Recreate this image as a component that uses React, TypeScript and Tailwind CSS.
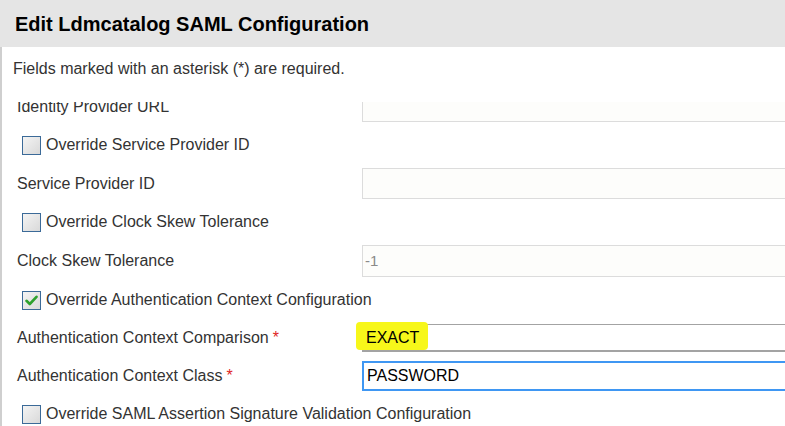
import React from "react";

function Check({ checked, label }: { checked?: boolean; label: string }) {
  return (
    <div className="flex h-[38px] items-center pl-[20px]">
      <span className="flex h-[19px] w-[19px] shrink-0 items-center justify-center border border-[#3b6a98] bg-gradient-to-br from-[#f4f4f4] to-[#d9d9d9]">
        {checked && (
          <svg width="13" height="11" viewBox="0 0 13 11">
            <path d="M1.5 5.8 L4.8 9 L11.5 1.8" fill="none" stroke="#2ea12e" strokeWidth="2.6" strokeLinecap="round" strokeLinejoin="round" />
          </svg>
        )}
      </span>
      <span className="ml-[5px] whitespace-nowrap text-[16px] text-[#333]">{label}</span>
    </div>
  );
}

function Field({
  label,
  required,
  h,
  ih,
  value,
  inputClass,
  children,
}: {
  label: string;
  required?: boolean;
  h: string;
  ih: string;
  value?: string;
  inputClass: string;
  children?: React.ReactNode;
}) {
  return (
    <div className={`flex items-center pl-[15px] ${h}`}>
      <div className="w-[345px] shrink-0 whitespace-nowrap text-[16px] text-[#333]">
        {label}
        {required && <span className="ml-[4px] text-[#e02424]">*</span>}
      </div>
      <div className={`relative flex w-[460px] shrink-0 items-center ${ih} ${inputClass}`}>
        {children}
        {value !== undefined && <span className="relative">{value}</span>}
      </div>
    </div>
  );
}

export default function App() {
  return (
    <div className="h-[426px] w-[785px] overflow-hidden bg-white font-['Liberation_Sans',Arial,sans-serif]">
      <div className="flex h-[47px] items-center bg-[#e5e5e5] px-[15px] text-[20px] font-bold text-black">
        Edit Ldmcatalog SAML Configuration
      </div>
      <div className="h-[379px] border-l-2 border-[#cfcfcf]">
        <div className="h-[55px] pl-[11px] pt-[13px] text-[16px] leading-[17px] text-[#333]">
          Fields marked with an asterisk (*) are required.
        </div>
        <div className="h-[324px] overflow-hidden">
          <div className="-mt-[15px] flex flex-col">
            <Field
              label="Identity Provider URL"
              h="h-[39px]"
              ih="h-[31px]"
              inputClass="border border-[#dcdcdc] bg-[#fdfdfb]"
            />
            <Check label="Override Service Provider ID" />
            <Field
              label="Service Provider ID"
              h="h-[39px]"
              ih="h-[31px]"
              inputClass="border border-[#dcdcdc] bg-[#fdfdfb]"
            />
            <Check label="Override Clock Skew Tolerance" />
            <Field
              label="Clock Skew Tolerance"
              h="h-[40px]"
              ih="h-[32px]"
              value="-1"
              inputClass="border border-[#dcdcdc] bg-[#fdfdfb] pl-[2px] text-[15px] text-[#8a8a8a]"
            />
            <Check checked label="Override Authentication Context Configuration" />
            <Field
              label="Authentication Context Comparison"
              required
              h="h-[38px]"
              ih="h-[28px]"
              value="EXACT"
              inputClass="border border-b-2 border-[#a3a3a3] bg-white pl-[3px] text-[16px] text-black"
            >
              <span className="absolute -left-[7px] -top-[3px] h-[28px] w-[72px] rounded-[4px] bg-[#f7f71a]" />
            </Field>
            <Field
              label="Authentication Context Class"
              required
              h="h-[38px]"
              ih="h-[30px]"
              value="PASSWORD"
              inputClass="border-2 border-[#3f97f3] bg-white pl-[3px] text-[16px] text-black"
            />
            <Check label="Override SAML Assertion Signature Validation Configuration" />
          </div>
        </div>
      </div>
    </div>
  );
}
